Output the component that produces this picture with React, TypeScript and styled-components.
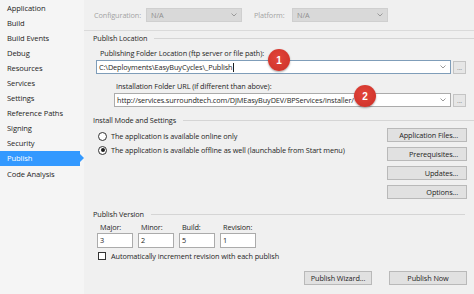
import React from "react";
import styled, { createGlobalStyle } from "styled-components";

const GlobalStyle = createGlobalStyle`
  html, body {
    margin: 0;
    padding: 0;
    background: #f0f0f0;
  }
  body {
    font-family: "Open Sans", "Noto Sans", sans-serif;
    font-size: 7.3px;
    letter-spacing: -0.1px;
    color: #1e1e1e;
  }
`;

const Page = styled.div`
  display: flex;
  width: 474px;
  height: 294px;
  overflow: hidden;
  background: #f0f0f0;
`;

const Sidebar = styled.nav`
  display: flex;
  flex-direction: column;
  width: 84px;
  flex-shrink: 0;
  background: #f5f5f5;
  font-size: 7.6px;
`;

const NavItem = styled.div<{ $active?: boolean }>`
  position: relative;
  display: flex;
  align-items: center;
  height: 15.1px;
  width: 80px;
  padding-left: 7px;
  box-sizing: border-box;
  color: ${({ $active }) => ($active ? "#ffffff" : "#1e1e1e")};
  background: ${({ $active }) => ($active ? "#3399ff" : "transparent")};

  &::after {
    content: "";
    display: ${({ $active }) => ($active ? "block" : "none")};
    position: absolute;
    right: -4px;
    top: 50%;
    margin-top: -4px;
    border-top: 4px solid transparent;
    border-bottom: 4px solid transparent;
    border-left: 4px solid #3399ff;
  }
`;

const Main = styled.div`
  position: relative;
  display: flex;
  flex-direction: column;
  flex: 1;
  padding-left: 9px;
`;

const ConfigRow = styled.div`
  display: flex;
  align-items: center;
  height: 15px;
  margin-top: 7px;
  padding-left: 1px;
`;

const DisabledLabel = styled.span<{ $w: number }>`
  width: ${({ $w }) => $w}px;
  color: #a3a3a3;
`;

const Combo = styled.div<{ $w: number; $gap?: number }>`
  display: flex;
  align-items: center;
  justify-content: space-between;
  width: ${({ $w }) => $w}px;
  height: 14px;
  margin-right: ${({ $gap }) => $gap ?? 0}px;
  padding: 0 4px;
  box-sizing: border-box;
  background: #d9d9d9;
  border: 1px solid #cfcfcf;
  color: #8e8e8e;
`;

const Rule = styled.div`
  height: 1px;
  margin: 8px 0 0 -9px;
  background: #dadada;
`;

const GroupHeader = styled.div<{ $top: number; $right?: number }>`
  display: flex;
  align-items: center;
  gap: 7px;
  height: 12px;
  margin-top: ${({ $top }) => $top}px;
  margin-right: ${({ $right }) => $right ?? 0}px;

  &::after {
    content: "";
    flex: 1;
    height: 1px;
    background: #d5d5d5;
  }
`;

const FieldLabel = styled.div<{ $left: number; $top: number }>`
  height: 12px;
  line-height: 12px;
  margin-left: ${({ $left }) => $left}px;
  margin-top: ${({ $top }) => $top}px;
`;

const PathRow = styled.div<{ $left: number; $top: number }>`
  display: flex;
  align-items: center;
  gap: 2px;
  margin-left: ${({ $left }) => $left}px;
  margin-top: ${({ $top }) => $top}px;
  width: ${({ $left }) => 373 - $left}px;
`;

const PathInput = styled.div<{ $focused?: boolean }>`
  display: flex;
  align-items: center;
  justify-content: space-between;
  flex: 1;
  height: 14px;
  padding: 0 4px 0 2px;
  box-sizing: border-box;
  background: #ffffff;
  border: 1px solid ${({ $focused }) => ($focused ? "#7f9db9" : "#ababab")};
  white-space: nowrap;
`;

const Caret = styled.span`
  display: inline-block;
  width: 1px;
  height: 9px;
  margin-left: 1px;
  vertical-align: middle;
  background: #1e1e1e;
`;

const BrowseButton = styled.div`
  display: flex;
  align-items: center;
  justify-content: center;
  width: 13px;
  height: 13px;
  box-sizing: border-box;
  background: #e6e6e6;
  border: 1px solid #c4c4c4;
  color: #8a8a8a;
  font-size: 7px;
  line-height: 7px;
`;

const Badge = styled.div<{ $x: number; $y: number }>`
  position: absolute;
  left: ${({ $x }) => $x}px;
  top: ${({ $y }) => $y}px;
  display: flex;
  align-items: center;
  justify-content: center;
  width: 22px;
  height: 22px;
  border-radius: 50%;
  background: radial-gradient(circle at 45% 40%, #e2453b 0%, #d2352c 70%, #b5261f 100%);
  box-shadow: 0 1px 2px rgba(0, 0, 0, 0.35);
  color: #ffffff;
  font-family: "Liberation Sans", Arial, sans-serif;
  font-weight: bold;
  font-size: 10px;
  letter-spacing: 0;
`;

const InstallBlock = styled.div`
  display: flex;
  justify-content: space-between;
  margin-top: 1px;
  margin-right: 7px;
`;

const RadioList = styled.div`
  display: flex;
  flex-direction: column;
  gap: 2px;
  margin-top: 3px;
  margin-left: 5px;
`;

const RadioRow = styled.div`
  display: flex;
  align-items: center;
  gap: 4px;
  height: 12px;
`;

const RadioDot = styled.span<{ $checked?: boolean }>`
  position: relative;
  width: 9px;
  height: 9px;
  box-sizing: border-box;
  border-radius: 50%;
  border: 1px solid #333333;
  background: #ffffff;

  &::after {
    content: "";
    display: ${({ $checked }) => ($checked ? "block" : "none")};
    position: absolute;
    left: 1.5px;
    top: 1.5px;
    width: 4px;
    height: 4px;
    border-radius: 50%;
    background: #1e1e1e;
  }
`;

const ButtonColumn = styled.div`
  display: flex;
  flex-direction: column;
  gap: 5px;
  margin-top: 1px;
`;

const Button = styled.div<{ $w?: number; $align?: string }>`
  display: flex;
  align-items: center;
  justify-content: ${({ $align }) => $align ?? "center"};
  width: ${({ $w }) => $w ?? 80}px;
  height: 14px;
  padding: 0 ${({ $align }) => ($align ? 8 : 0)}px;
  box-sizing: border-box;
  background: #e1e1e1;
  border: 1px solid #b9b9b9;
  color: #1e1e1e;
  white-space: nowrap;
`;

const VersionGrid = styled.div`
  display: grid;
  grid-template-columns: 36px 36px 36px 36px;
  column-gap: 5px;
  margin-top: 1px;
  margin-left: 4px;
`;

const VersionLabel = styled.div`
  height: 12px;
  line-height: 12px;
  padding-left: 3px;
`;

const VersionInput = styled.div`
  height: 15px;
  line-height: 13px;
  padding-left: 2px;
  box-sizing: border-box;
  background: #ffffff;
  border: 1px solid #ababab;
`;

const CheckRow = styled.div`
  display: flex;
  align-items: center;
  gap: 5px;
  height: 12px;
  margin-top: 2px;
  margin-left: 5px;
`;

const CheckBox = styled.span`
  width: 8px;
  height: 8px;
  box-sizing: border-box;
  border: 1px solid #333333;
  background: #ffffff;
`;

const Footer = styled.div`
  display: flex;
  justify-content: flex-end;
  gap: 17px;
  margin-top: 9px;
  margin-right: 7px;
`;

const navItems = [
  "Application",
  "Build",
  "Build Events",
  "Debug",
  "Resources",
  "Services",
  "Settings",
  "Reference Paths",
  "Signing",
  "Security",
  "Publish",
  "Code Analysis",
];

const versionParts = [
  { label: "Major:", value: "3" },
  { label: "Minor:", value: "2" },
  { label: "Build:", value: "5" },
  { label: "Revision:", value: "1" },
];

const Chevron = () => (
  <svg width="6" height="4" viewBox="0 0 6 4">
    <path d="M0.5 0.5 L3 3 L5.5 0.5" fill="none" stroke="#9a9a9a" strokeWidth="1" />
  </svg>
);

const App: React.FC = () => (
  <>
    <GlobalStyle />
    <Page>
      <Sidebar>
        {navItems.map((item) => (
          <NavItem key={item} $active={item === "Publish"}>
            {item}
          </NavItem>
        ))}
      </Sidebar>
      <Main>
        <ConfigRow>
          <DisabledLabel $w={52}>Configuration:</DisabledLabel>
          <Combo $w={96} $gap={12}>
            N/A
            <Chevron />
          </Combo>
          <DisabledLabel $w={38}>Platform:</DisabledLabel>
          <Combo $w={96}>
            N/A
            <Chevron />
          </Combo>
        </ConfigRow>
        <Rule />
        <GroupHeader $top={1}>Publish Location</GroupHeader>
        <FieldLabel $left={7} $top={3}>
          Publishing Folder Location (ftp server or file path):
        </FieldLabel>
        <PathRow $left={3} $top={1}>
          <PathInput $focused>
            <span>
              C:\Deployments\EasyBuyCycles\_Publish
              <Caret />
            </span>
            <Chevron />
          </PathInput>
          <BrowseButton>...</BrowseButton>
        </PathRow>
        <FieldLabel $left={23} $top={6}>
          Installation Folder URL (if different than above):
        </FieldLabel>
        <PathRow $left={21} $top={1}>
          <PathInput>
            <span>http://services.surroundtech.com/DJMEasyBuyDEV/BPServices/installer/</span>
            <Chevron />
          </PathInput>
          <BrowseButton>...</BrowseButton>
        </PathRow>
        <GroupHeader $top={7}>Install Mode and Settings</GroupHeader>
        <InstallBlock>
          <RadioList>
            <RadioRow>
              <RadioDot />
              The application is available online only
            </RadioRow>
            <RadioRow>
              <RadioDot $checked />
              The application is available offline as well (launchable from Start menu)
            </RadioRow>
          </RadioList>
          <ButtonColumn>
            <Button $align="flex-end">Application Files...</Button>
            <Button $align="flex-end">Prerequisites...</Button>
            <Button $align="flex-end">Updates...</Button>
            <Button $align="flex-end">Options...</Button>
          </ButtonColumn>
        </InstallBlock>
        <GroupHeader $top={9} $right={9}>
          Publish Version
        </GroupHeader>
        <VersionGrid>
          {versionParts.map((p) => (
            <VersionLabel key={p.label}>{p.label}</VersionLabel>
          ))}
          {versionParts.map((p) => (
            <VersionInput key={p.label}>{p.value}</VersionInput>
          ))}
        </VersionGrid>
        <CheckRow>
          <CheckBox />
          Automatically increment revision with each publish
        </CheckRow>
        <Footer>
          <Button $w={68}>Publish Wizard...</Button>
          <Button $w={78}>Publish Now</Button>
        </Footer>
        <Badge $x={184} $y={49}>1</Badge>
        <Badge $x={270} $y={85}>2</Badge>
      </Main>
    </Page>
  </>
);

export default App;
